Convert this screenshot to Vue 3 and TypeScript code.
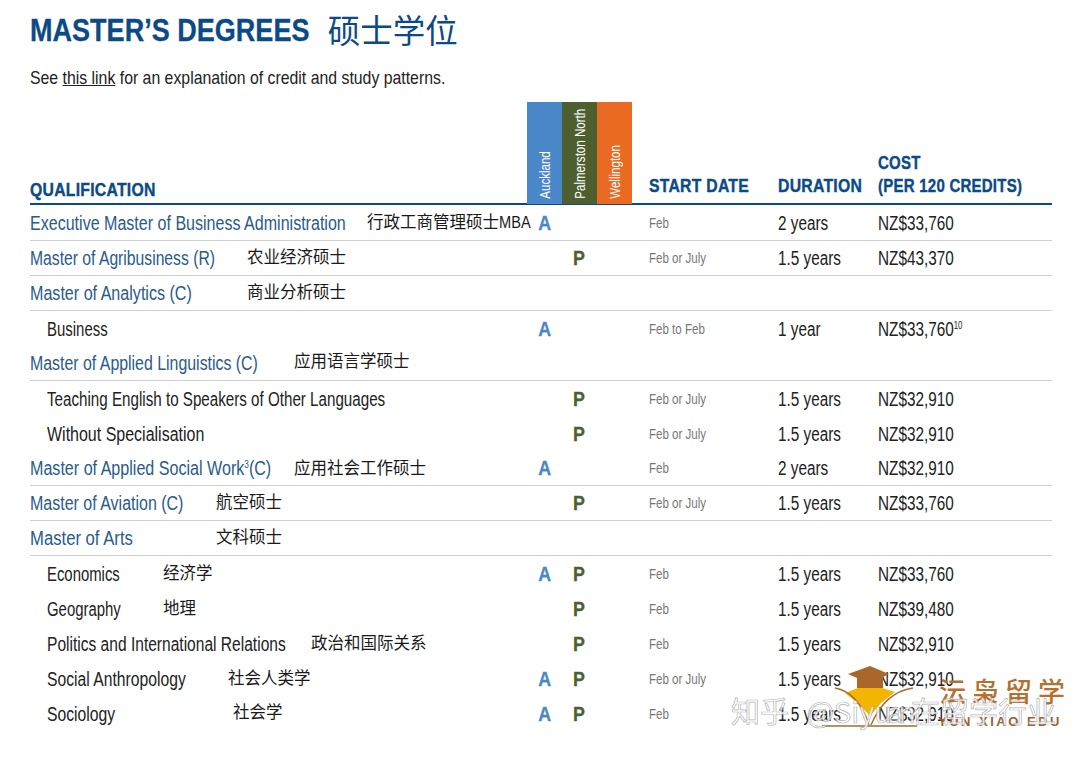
<script setup lang="ts">
interface Row {
  name: string
  sup?: string
  tail?: string
  cn?: string
  cnTail?: string
  cnX?: number
  cnY?: number
  sx?: number
  sub?: boolean
  a?: boolean
  p?: boolean
  start?: string
  dur?: string
  cost?: string
  costSup?: string
  line?: boolean
}
const rows: Row[] = [
  { name: 'Executive Master of Business Administration', sx: 0.823, cn: '行政工商管理硕士', cnTail: 'MBA', cnX: 337, cnY: -2, a: true, start: 'Feb', dur: '2 years', cost: 'NZ$33,760', line: true },
  { name: 'Master of Agribusiness (R)', cn: '农业经济硕士', cnX: 217, cnY: -2, p: true, start: 'Feb or July', dur: '1.5 years', cost: 'NZ$43,370', line: true },
  { name: 'Master of Analytics (C)', sx: 0.825, cn: '商业分析硕士', cnX: 217, cnY: -2, line: true },
  { name: 'Business', sx: 0.767, sub: true, a: true, start: 'Feb to Feb', dur: '1 year', cost: 'NZ$33,760', costSup: '10' },
  { name: 'Master of Applied Linguistics (C)', sx: 0.815, cn: '应用语言学硕士', cnX: 264, cnY: -3, line: true },
  { name: 'Teaching English to Speakers of Other Languages', sx: 0.778, sub: true, p: true, start: 'Feb or July', dur: '1.5 years', cost: 'NZ$32,910' },
  { name: 'Without Specialisation', sx: 0.82, sub: true, p: true, start: 'Feb or July', dur: '1.5 years', cost: 'NZ$32,910' },
  { name: 'Master of Applied Social Work', sx: 0.825, sup: '3', tail: '(C)', cn: '应用社会工作硕士', cnX: 264, cnY: -1, a: true, start: 'Feb', dur: '2 years', cost: 'NZ$32,910', line: true },
  { name: 'Master of Aviation (C)', sx: 0.82, cn: '航空硕士', cnX: 186, cnY: -2, p: true, start: 'Feb or July', dur: '1.5 years', cost: 'NZ$33,760', line: true },
  { name: 'Master of Arts', sx: 0.855, cn: '文科硕士', cnX: 186, cnY: -2, line: true },
  { name: 'Economics', sx: 0.763, sub: true, cn: '经济学', cnX: 133, cnY: -2, a: true, p: true, start: 'Feb', dur: '1.5 years', cost: 'NZ$33,760' },
  { name: 'Geography', sx: 0.765, sub: true, cn: '地理', cnX: 133, cnY: -2, p: true, start: 'Feb', dur: '1.5 years', cost: 'NZ$39,480' },
  { name: 'Politics and International Relations', sx: 0.798, sub: true, cn: '政治和国际关系', cnX: 281, cnY: -2, p: true, start: 'Feb', dur: '1.5 years', cost: 'NZ$32,910' },
  { name: 'Social Anthropology', sub: true, cn: '社会人类学', cnX: 198, cnY: -2, a: true, p: true, start: 'Feb or July', dur: '1.5 years', cost: 'NZ$32,910' },
  { name: 'Sociology', sub: true, cn: '社会学', cnX: 203, cnY: -3, a: true, p: true, start: 'Feb', dur: '1.5 years', cost: 'NZ$32,910' },
]
function squeeze(r: Row) {
  return r.sx ? { transform: `scaleX(${r.sx})` } : undefined
}
</script>

<template>
  <main class="page">
    <h1 class="title"><span class="nar title-en">MASTER’S DEGREES</span><span class="title-cn">硕士学位</span></h1>
    <p class="intro"><span class="nar intro-text">See <u>this link</u> for an explanation of credit and study patterns.</span></p>

    <div class="head grid">
      <div class="hcell qual"><span class="nar">QUALIFICATION</span></div>
      <div class="campus auckland"><span class="squeeze"><span class="turn">Auckland</span></span></div>
      <div class="campus palmerston"><span class="squeeze"><span class="turn">Palmerston North</span></span></div>
      <div class="campus wellington"><span class="squeeze"><span class="turn">Wellington</span></span></div>
      <div class="hcell start-col"><span class="nar">START DATE</span></div>
      <div class="hcell"><span class="nar">DURATION</span></div>
      <div class="hcell"><span class="nar cost-head">COST<br />(PER 120 CREDITS)</span></div>
    </div>

    <div class="rows">
      <div v-for="r in rows" :key="r.name" class="row grid" :class="{ line: r.line }">
        <div class="name" :class="{ sub: r.sub }">
          <span class="nar" :style="squeeze(r)">{{ r.name }}<sup v-if="r.sup">{{ r.sup }}</sup>{{ r.tail }}</span>
          <span v-if="r.cn" class="cn" :style="{ left: r.cnX + 'px', top: r.cnY + 'px' }">{{ r.cn }}<span v-if="r.cnTail" class="cn-tail">{{ r.cnTail }}</span></span>
        </div>
        <div class="mark mark-a"><span v-if="r.a" class="glyph">A</span></div>
        <div class="mark mark-p"><span v-if="r.p" class="glyph">P</span></div>
        <div></div>
        <div class="start start-col"><span class="nar">{{ r.start }}</span></div>
        <div class="val"><span class="nar">{{ r.dur }}</span></div>
        <div class="val"><span class="nar">{{ r.cost }}<sup v-if="r.costSup">{{ r.costSup }}</sup></span></div>
      </div>
    </div>

    <div class="watermark">
      <svg class="logo" width="100" height="66" viewBox="822 664 100 66">
        <path d="M848 674 L870 666 L889 674 L883 677 L883 688 L857 688 L857 678 Z" fill="#a9682a" />
        <path d="M845 693 L858 688 L882 688 L895 692 L881 703 L870 716 L859 704 Z" fill="#f4b400" />
        <path d="M835 688 Q858 692 869 725 M913 688 Q885 692 871 725" fill="none" stroke="#a9682a" stroke-width="1.4" />
        <path d="M822 726 H917" stroke="#a9682a" stroke-width="1.6" />
      </svg>
      <span class="wm-cn">沄枭留学</span>
      <span class="wm-en">YUN XIAO EDU</span>
      <span class="wm-zhihu">知乎 @Siy<span class="wm-tail">uan</span>在留学行业</span>
    </div>
  </main>
</template>

<style scoped>
.page {
  position: relative;
  width: 1080px;
  height: 759px;
  padding: 0 28px 0 30px;
  box-sizing: border-box;
  overflow: hidden;
  background: #fff;
  font-family: "Liberation Sans", "Noto Sans CJK SC", sans-serif;
  color: #222;
}
.nar {
  display: inline-block;
  white-space: nowrap;
  transform: scaleX(0.805);
  transform-origin: left center;
}
.title {
  display: flex;
  align-items: center;
  margin: 0;
  height: 60px;
  font-size: 32px;
  line-height: 40px;
  font-weight: 700;
  color: #0c4a86;
  white-space: nowrap;
}
.title-en {
  transform: scaleX(0.845);
  margin-right: -51px;
  -webkit-text-stroke: 0.3px #0c4a86;
}
.title-cn {
  margin: -2px 0 0 18px;
  font-family: "Noto Sans CJK SC", sans-serif;
  font-weight: 400;
  font-size: 32.5px;
}
.intro {
  margin: 0;
  padding-top: 7px;
  height: 42px;
  box-sizing: border-box;
  font-size: 19px;
  line-height: 22px;
}
.intro-text { transform: scaleX(0.833); }
.grid {
  display: grid;
  grid-template-columns: 497px 35px 35px 35px 146px 100px 1fr;
}
.head {
  grid-template-rows: 101px;
  height: 101px;
  border-bottom: 2px solid #0c4a86;
}
.rows { padding-top: 1px; }
.hcell {
  align-self: end;
  padding-bottom: 6px;
  font-size: 19px;
  line-height: 23px;
  font-weight: 700;
  letter-spacing: 0.3px;
  color: #0c4a86;
  white-space: nowrap;
  -webkit-text-stroke: 0.4px #0c4a86;
}
.qual { padding-bottom: 2px; }
.cost-head { transform: scaleX(0.79); }
.hcell .nar:not(.cost-head) { transform: scaleX(0.83); }
.start-col { padding-left: 17px; }
.campus {
  display: flex;
  align-items: flex-end;
  justify-content: center;
  min-height: 0;
  height: 102px;
  padding-bottom: 5px;
  box-sizing: border-box;
  color: #fff;
  font-size: 15px;
}
.squeeze {
  display: block;
  transform: scaleY(0.77);
  transform-origin: center bottom;
}
.turn {
  display: block;
  writing-mode: vertical-rl;
  transform: rotate(180deg);
  white-space: nowrap;
}
.auckland { background: #4a87c8; }
.palmerston { background: #4e5f2f; }
.wellington { background: #ea6a23; }
.row {
  height: 35px;
  box-sizing: border-box;
  align-items: center;
}
.line { border-bottom: 1px solid #cfcfcf; }
.name {
  position: relative;
  height: 22px;
  font-size: 19.5px;
  line-height: 22px;
  color: #2b5b8c;
  white-space: nowrap;
}
.name.sub {
  padding-left: 17px;
  color: #222;
}
.cn {
  position: absolute;
  font-family: "Noto Sans CJK SC", sans-serif;
  font-size: 16.5px;
  line-height: 22px;
  color: #1a1a1a;
}
.cn-tail {
  display: inline-block;
  font-family: "Liberation Sans", sans-serif;
  transform: scaleX(0.885);
  transform-origin: left center;
}
sup {
  font-size: 10px;
  line-height: 0;
}
.mark {
  display: flex;
  justify-content: center;
  font-size: 21px;
  line-height: 24px;
  font-weight: 700;
  -webkit-text-stroke: 0.3px currentColor;
}
.glyph {
  display: block;
  transform: scaleX(0.85);
}
.mark-a { color: #4a87c8; }
.mark-p { color: #4e5f2f; }
.start {
  font-size: 15px;
  line-height: 18px;
  color: #777;
}
.start .nar { transform: scaleX(0.77); }
.val {
  font-size: 19.5px;
  line-height: 22px;
  color: #222;
}
.val .nar { transform: scaleX(0.785); }
.watermark {
  position: absolute;
  left: 0;
  top: 0;
  width: 1080px;
  height: 759px;
  pointer-events: none;
}
.logo {
  position: absolute;
  left: 822px;
  top: 664px;
}
.wm-cn {
  position: absolute;
  left: 939px;
  top: 671px;
  font-family: "Noto Sans CJK SC", sans-serif;
  font-size: 27px;
  font-weight: 500;
  line-height: 40px;
  letter-spacing: 6px;
  color: #b5702e;
  white-space: nowrap;
}
.wm-en {
  position: absolute;
  left: 938px;
  top: 714px;
  font-size: 13px;
  line-height: 16px;
  font-weight: 700;
  letter-spacing: 2.5px;
  color: #9a6230;
  white-space: nowrap;
}
.wm-zhihu {
  position: absolute;
  left: 731px;
  top: 691px;
  font-family: "Noto Sans CJK SC", sans-serif;
  font-size: 29px;
  line-height: 38px;
  word-spacing: 11px;
  color: rgba(255, 255, 255, 0.78);
  -webkit-text-stroke: 0.7px rgba(150, 150, 150, 0.75);
  white-space: nowrap;
}
.wm-tail { letter-spacing: -5px; }
</style>
